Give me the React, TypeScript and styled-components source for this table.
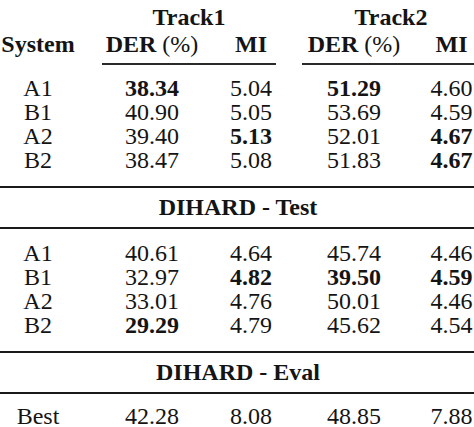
import React from "react";
import styled, { createGlobalStyle } from "styled-components";

const Global = createGlobalStyle`
  html, body { margin: 0; padding: 0; background: #ffffff; overflow: hidden; }
  #root { width: 474px; height: 427px; overflow: hidden; }
`;

const Table = styled.div`
  width: 480px;
  font-family: "Liberation Serif", "Times New Roman", serif;
  font-size: 24px;
  line-height: 24px;
  color: #141414;
  display: flex;
  flex-direction: column;
`;

const Grid = styled.div`
  display: grid;
  grid-template-columns: 76px 26px 100px 74px 26px 104px 74px;
  grid-template-areas: "sys . der1 mi1 . der2 mi2";
  grid-auto-rows: 24px;
`;

const Header = styled(Grid)`
  padding-top: 5px;
  row-gap: 3px;
`;

type Area = "sys" | "der1" | "mi1" | "der2" | "mi2";

const padFor: Record<Area, number> = { sys: 0, der1: 0, mi1: 24, der2: 0, mi2: 17 };

const Cell = styled.div<{ $area: Area; $bold?: boolean }>`
  grid-area: ${(p) => p.$area};
  grid-row: auto;
  text-align: center;
  white-space: nowrap;
  padding-left: ${(p) => padFor[p.$area]}px;
  font-weight: ${(p) => (p.$bold ? 700 : 400)};
`;

const Span = styled.div<{ $from: Area; $to: Area }>`
  grid-column: ${(p) => p.$from}-start / ${(p) => p.$to}-end;
  grid-row: 1;
  text-align: center;
  font-weight: 700;
`;

const HeadCell = styled(Cell)`
  grid-row: 2;
  font-weight: 700;
`;

const Light = styled.span`
  font-weight: 400;
`;

const CmidRow = styled(Grid)`
  grid-auto-rows: 1.5px;
  margin-top: 7px;
`;

const Cmid = styled.div<{ $from: Area; $to: Area }>`
  grid-column: ${(p) => p.$from}-start / ${(p) => p.$to}-end;
  background: #2a2a2a;
`;

const Group = styled.div<{ $top: number; $bottom: number }>`
  display: flex;
  flex-direction: column;
  padding-top: ${(p) => p.$top}px;
  padding-bottom: ${(p) => p.$bottom}px;
`;

const Rule = styled.div`
  height: 2px;
  background: #1a1a1a;
`;

const Title = styled.div`
  padding: 7px 0 8px;
  padding-right: 4px;
  text-align: center;
  font-weight: 700;
`;

type Row = { sys: string; vals: [string, string, string, string]; bold: number[] };

const group1: Row[] = [
  { sys: "A1", vals: ["38.34", "5.04", "51.29", "4.60"], bold: [0, 2] },
  { sys: "B1", vals: ["40.90", "5.05", "53.69", "4.59"], bold: [] },
  { sys: "A2", vals: ["39.40", "5.13", "52.01", "4.67"], bold: [1, 3] },
  { sys: "B2", vals: ["38.47", "5.08", "51.83", "4.67"], bold: [3] },
];

const group2: Row[] = [
  { sys: "A1", vals: ["40.61", "4.64", "45.74", "4.46"], bold: [] },
  { sys: "B1", vals: ["32.97", "4.82", "39.50", "4.59"], bold: [1, 2, 3] },
  { sys: "A2", vals: ["33.01", "4.76", "50.01", "4.46"], bold: [] },
  { sys: "B2", vals: ["29.29", "4.79", "45.62", "4.54"], bold: [0] },
];

const evalRows: Row[] = [{ sys: "Best", vals: ["42.28", "8.08", "48.85", "7.88"], bold: [] }];

const areas: Area[] = ["der1", "mi1", "der2", "mi2"];

const DataRow = ({ row }: { row: Row }) => (
  <Grid>
    <Cell $area="sys">{row.sys}</Cell>
    {row.vals.map((v, i) => (
      <Cell key={i} $area={areas[i]} $bold={row.bold.includes(i)}>
        {v}
      </Cell>
    ))}
  </Grid>
);

export default function App() {
  return (
    <>
      <Global />
      <Table>
        <Header>
          <Span $from="der1" $to="mi1">Track1</Span>
          <Span $from="der2" $to="mi2">Track2</Span>
          <HeadCell $area="sys">System</HeadCell>
          <HeadCell $area="der1">
            DER <Light>(%)</Light>
          </HeadCell>
          <HeadCell $area="mi1">MI</HeadCell>
          <HeadCell $area="der2">
            DER <Light>(%)</Light>
          </HeadCell>
          <HeadCell $area="mi2">MI</HeadCell>
        </Header>
        <CmidRow>
          <Cmid $from="der1" $to="mi1" />
          <Cmid $from="der2" $to="mi2" />
        </CmidRow>
        <Group $top={11} $bottom={14}>
          {group1.map((r) => (
            <DataRow key={r.sys} row={r} />
          ))}
        </Group>
        <Rule />
        <Title>DIHARD - Test</Title>
        <Rule />
        <Group $top={12} $bottom={14}>
          {group2.map((r) => (
            <DataRow key={r.sys} row={r} />
          ))}
        </Group>
        <Rule />
        <Title>DIHARD - Eval</Title>
        <Rule />
        <Group $top={10} $bottom={0}>
          {evalRows.map((r) => (
            <DataRow key={r.sys} row={r} />
          ))}
        </Group>
      </Table>
    </>
  );
}
